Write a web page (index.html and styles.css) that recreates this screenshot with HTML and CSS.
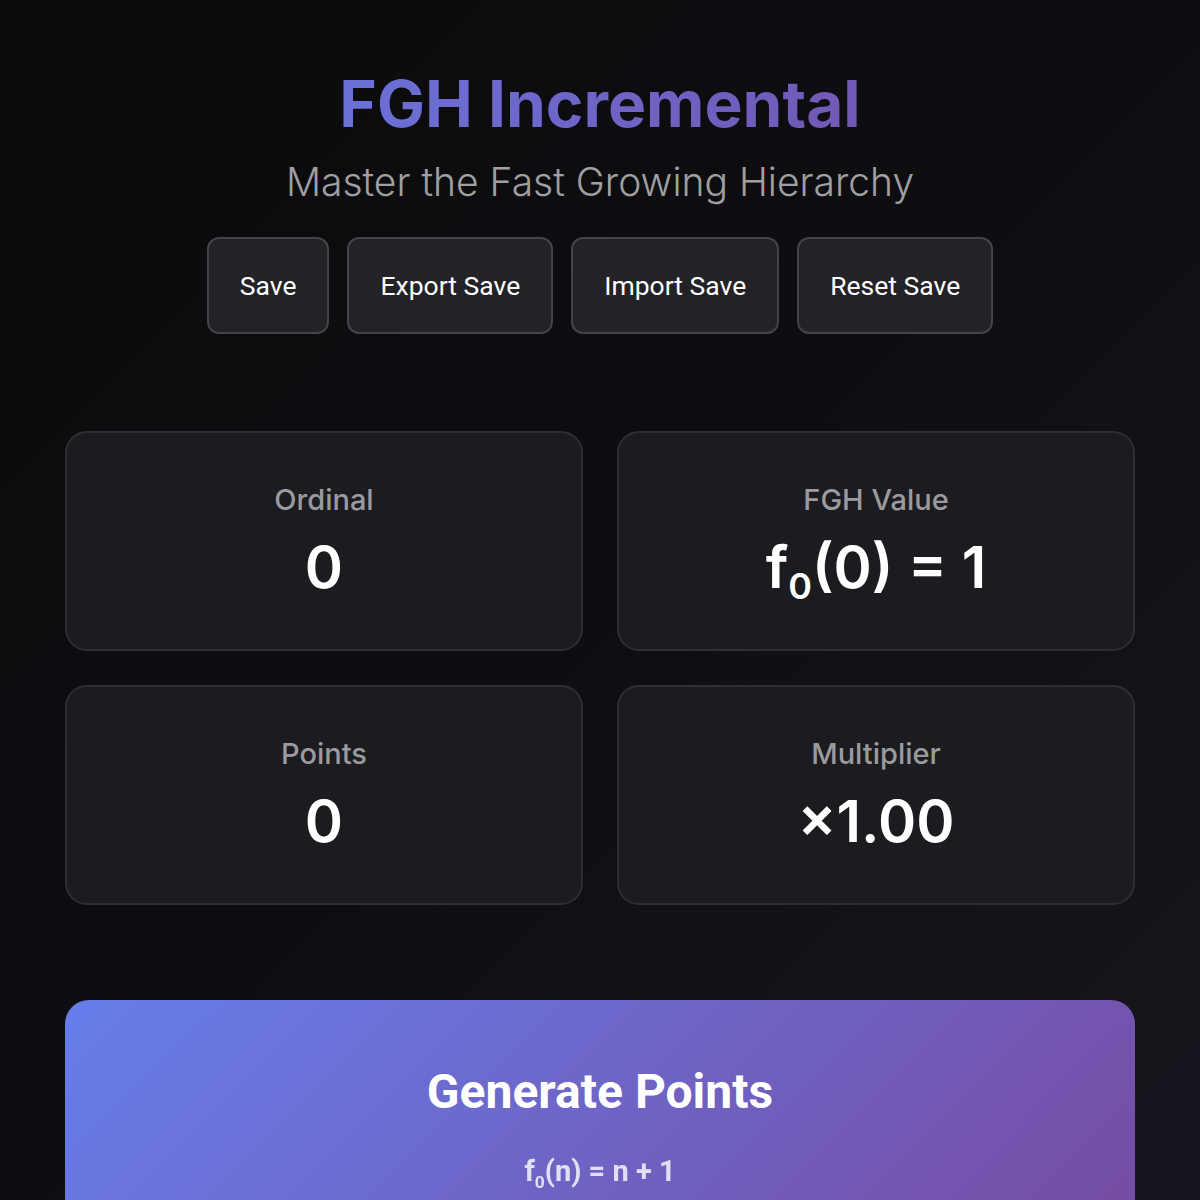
FILE: index.html
```html
<!DOCTYPE html>
<html lang="en">
<head>
    <meta charset="UTF-8">
    <meta name="viewport" content="width=device-width, initial-scale=1.0">
    <title>FGH Incremental</title>
    <link rel="stylesheet" href="styles.css">
</head>
<body>
    <div id="game">
        <header>
            <h1>FGH Incremental</h1>
            <p class="subtitle">Master the Fast Growing Hierarchy</p>
            <div class="save-controls">
                <button class="save-btn">Save</button>
                <button class="save-btn">Export Save</button>
                <button class="save-btn">Import Save</button>
                <button class="save-btn">Reset Save</button>
            </div>
        </header>

        <section class="stats">
            <div class="stat-card">
                <div class="stat-label">Ordinal</div>
                <div class="stat-value">0</div>
            </div>
            <div class="stat-card">
                <div class="stat-label">FGH Value</div>
                <div class="stat-value">f<sub>0</sub>(0) = 1</div>
            </div>
            <div class="stat-card">
                <div class="stat-label">Points</div>
                <div class="stat-value">0</div>
            </div>
            <div class="stat-card">
                <div class="stat-label">Multiplier</div>
                <div class="stat-value">×1.00</div>
            </div>
        </section>

        <button class="generate-btn">
            <span class="generate-title">Generate Points</span>
            <span class="generate-formula">f<sub>0</sub>(n) = n + 1</span>
        </button>
    </div>
</body>
</html>
```

FILE: styles.css
```css
body {
    margin: 0;
    padding: 0;
    min-height: 1200px;
    font-family: Inter, "Noto Sans", sans-serif;
    color: #fff;
    background: linear-gradient(135deg, #0b0b0d 0%, #0e0e12 50%, #16161e 100%);
}
#game {
    max-width: 1070px;
    margin: 0 auto;
    padding-top: 66px;
}
header {
    text-align: center;
}
header h1 {
    margin: 0;
    font-size: 64px;
    font-weight: 700;
    line-height: 1.2;
    background: linear-gradient(90deg, #667eea, #764ba2);
    -webkit-background-clip: text;
    background-clip: text;
    color: transparent;
}
.subtitle {
    margin: 16px 0 0;
    font-size: 39px;
    font-weight: 300;
    color: #a0a0a0;
    line-height: 1.2;
}
.save-controls {
    display: flex;
    justify-content: center;
    gap: 18px;
    margin-top: 31px;
}
.save-btn {
    font-family: Roboto, sans-serif;
    font-size: 26.5px;
    color: #fff;
    background-color: #232327;
    border: 2px solid #444448;
    border-radius: 12px;
    padding: 31px 31px;
    cursor: pointer;
}
.save-btn:hover {
    background-color: #2c2c31;
}
.stats {
    display: grid;
    grid-template-columns: 1fr 1fr;
    gap: 34px;
    margin-top: 97px;
}
.stat-card {
    background-color: #1c1c20;
    border: 2px solid #2e2e33;
    border-radius: 22px;
    height: 216px;
    display: flex;
    flex-direction: column;
    align-items: center;
    justify-content: center;
    gap: 19px;
}
.stat-label {
    font-size: 29px;
    color: #9a9a9f;
    font-weight: 500;
}
.stat-value {
    font-size: 58px;
    font-weight: 600;
    line-height: 1.1;
}
.stat-value sub {
    font-size: 0.62em;
    vertical-align: -0.3em;
    line-height: 0;
}
.generate-btn {
    display: flex;
    flex-direction: column;
    align-items: center;
    width: 100%;
    margin-top: 95px;
    padding: 63px 20px 40px;
    border: none;
    border-radius: 24px;
    background: linear-gradient(135deg, #667eea 0%, #764ba2 100%);
    color: #fff;
    font-family: Roboto, sans-serif;
    cursor: pointer;
}
.generate-title {
    font-size: 48px;
    font-weight: 700;
}
.generate-formula {
    margin-top: 34px;
    font-size: 29px;
    font-weight: 700;
    opacity: 0.8;
}
.generate-formula sub {
    font-size: 0.6em;
    line-height: 0;
}
```
